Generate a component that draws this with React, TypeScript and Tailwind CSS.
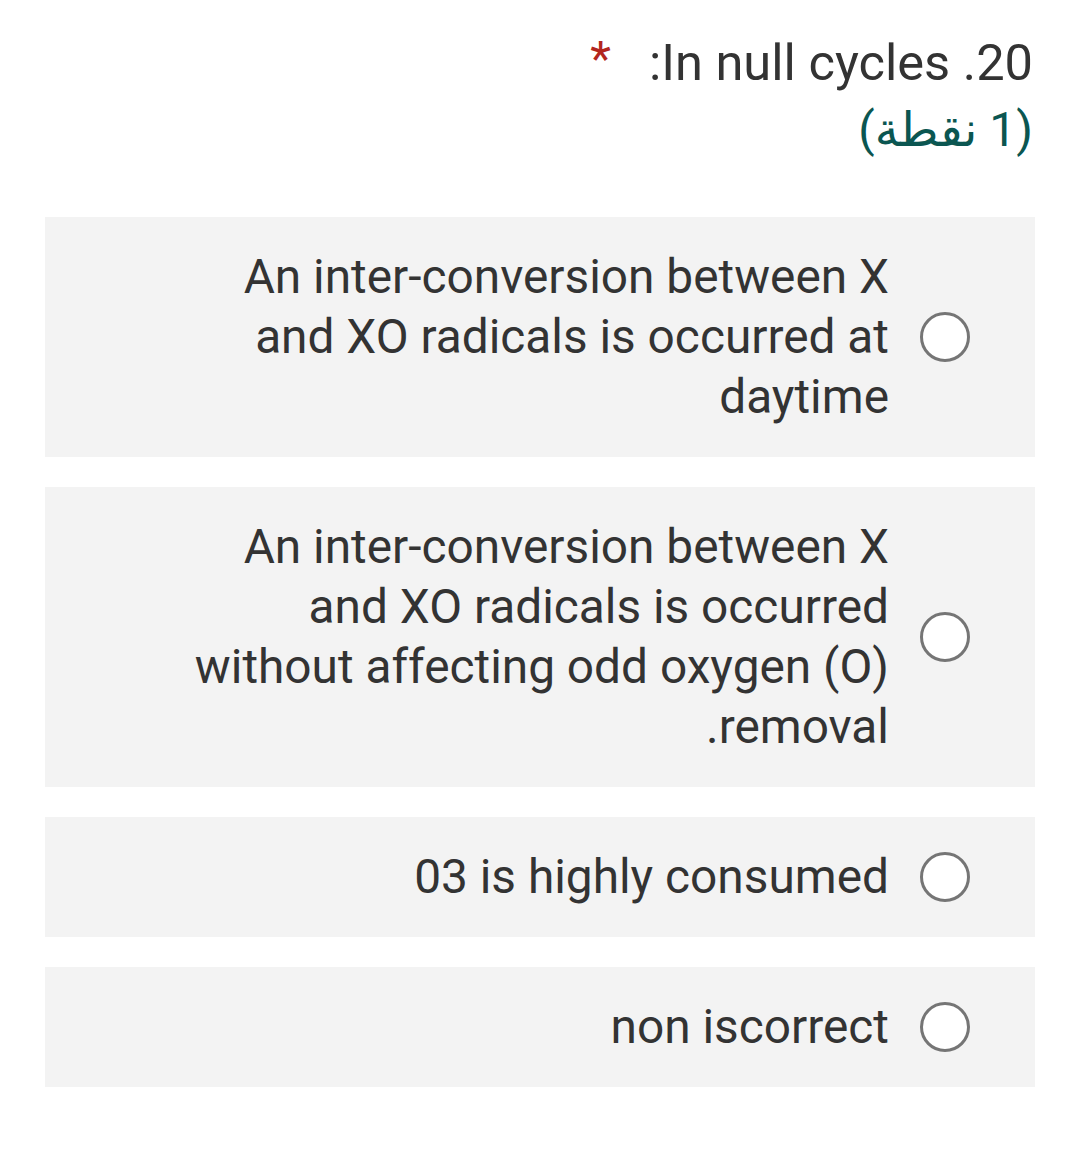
const options: string[][] = [
  ["An inter-conversion between X", "and XO radicals is occurred at", "daytime"],
  [
    "An inter-conversion between X",
    "and XO radicals is occurred",
    "without affecting odd oxygen (O)",
    ".removal",
  ],
  ["03 is highly consumed"],
  ["non iscorrect"],
];

const Radio = () => (
  <span className="block h-[50px] w-[50px] shrink-0 rounded-full border-[3px] border-[#757575] bg-white" />
);

export default function App() {
  return (
    <div
      className="w-[1080px] h-[1156px] bg-white text-[#333333]"
      style={{ fontFamily: "Roboto, 'DejaVu Sans', sans-serif" }}
    >
      <div className="flex flex-col items-end pt-[30px] pr-[47px]">
        <div className="flex flex-row items-start gap-[38px] text-[50.6px] leading-[66px]">
          <span className="text-[#b3261e] text-[48px] leading-[58px]">*</span>
          <span>:In null cycles .20</span>
        </div>
        <div dir="rtl" className="text-[48px] leading-[68px] text-[#0b5651]">
          (1 نقطة)
        </div>
      </div>

      <div className="mt-[53px] flex flex-col gap-[30px] px-[45px]">
        {options.map((lines, i) => (
          <div
            key={i}
            className="flex flex-row items-center justify-end gap-[31px] bg-[#f3f3f3] py-[30px] pr-[65px]"
          >
            <div className="text-right text-[47.8px] leading-[60px]">
              {lines.map((l, j) => (
                <div key={j}>{l}</div>
              ))}
            </div>
            <Radio />
          </div>
        ))}
      </div>
    </div>
  );
}
